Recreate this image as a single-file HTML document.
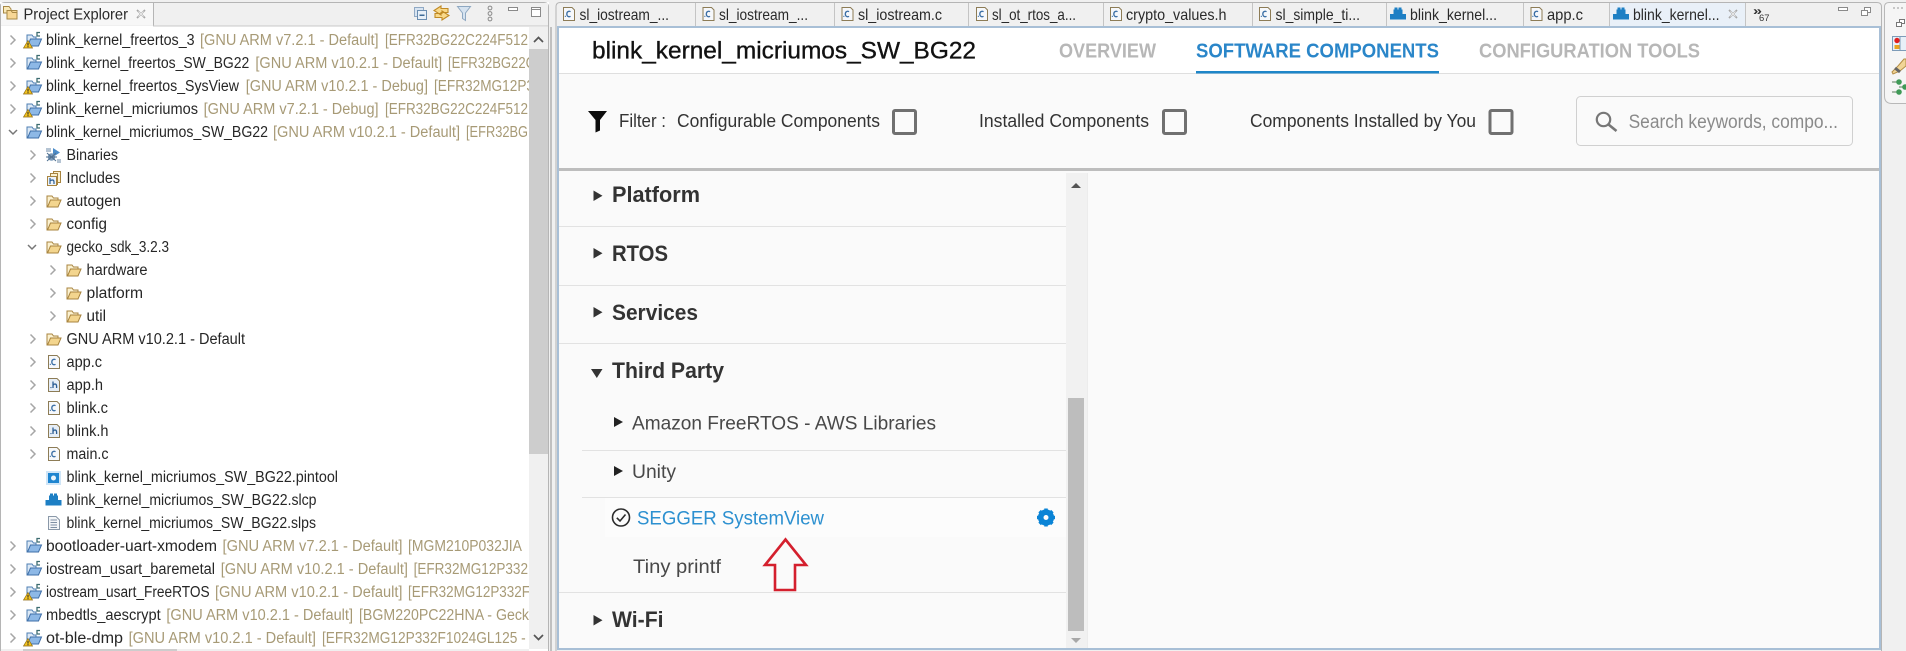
<!DOCTYPE html>
<html><head><meta charset="utf-8"><title>Simplicity Studio</title>
<style>
html,body{margin:0;padding:0;width:1906px;height:651px;overflow:hidden;background:#f0f0f0}
svg{display:block}
text{font-family:"Liberation Sans",sans-serif;white-space:pre}
.t{font-size:15.5px;fill:#262626}
.d{font-size:15.5px;fill:#a79a76}
.e{font-size:16px;fill:#2a2a2a}
.h{font-size:22px;font-weight:bold;fill:#333}
.s{font-size:19.500px;fill:#484848}
.f{font-size:18.500px;fill:#333}
.n{font-size:20px;font-weight:bold;fill:#b7b7b7}
</style></head><body>
<svg width="1906" height="651" viewBox="0 0 1906 651" xmlns="http://www.w3.org/2000/svg">
<defs>
<clipPath id="lc"><rect x="0" y="26" width="529" height="625"/></clipPath>
<g id="cr"><path d="M-2.500 -4.500L2 0L-2.500 4.500" fill="none" stroke="#a6a6a6" stroke-width="1.500"/></g>
<g id="cd"><path d="M-4 -2L0 2L4 -2" fill="none" stroke="#777" stroke-width="1.500"/></g>
<g id="prj"><path d="M1 -5H6L7.500 -3H10V-1H5L2 6H1Z" fill="#dce9f6" stroke="#4f7fb3"/><path d="M4.500 -1H15.500L12.500 6H1.500Z" fill="#8db8e6" stroke="#3f6fa8"/><path d="M14 -7.500h-3v3.500h3" fill="none" stroke="#3c6c70" stroke-width="1.300"/></g>
<g id="warn"><path d="M4 1.500L8.500 9H-0.500Z" fill="#f2c21f" stroke="#8d6a12" stroke-width=".7"/><rect x="3.500" y="3.800" width="1" height="2.800" fill="#222"/><rect x="3.500" y="7.200" width="1" height="1" fill="#222"/></g>
<g id="fo"><path d="M1 -5H6L7.500 -3H12V-1H5L2 6H1Z" fill="#fbf1cf" stroke="#a8843f"/><path d="M4.500 -1H15L12 6H1.500Z" fill="#f3d58e" stroke="#a8843f"/></g>
<g id="fc"><path d="M.5 -6.500H9L11.500 -4V6.500H.5Z" fill="#f6f8fb" stroke="#8d7c56"/><path d="M7.500 -2.200Q6.500 -3 5.500 -2.600Q3.800 -2 3.800 0T5.500 2.600Q6.500 3 7.500 2.200" fill="none" stroke="#3a6ea5" stroke-width="1.300"/><rect x="1.800" y="1.800" width="1.100" height="1.100" fill="#3a6ea5"/></g>
<g id="fh"><path d="M.5 -6.500H9L11.500 -4V6.500H.5Z" fill="#e6eef7" stroke="#8d7c56"/><path d="M5 -3.500V3M5 0.500Q5.500 -1 7 -1T8.600 1V3" fill="none" stroke="#2d5f95" stroke-width="1.300"/><rect x="2.400" y="2" width="1.100" height="1.100" fill="#2d5f95"/></g>
<g id="blk" fill="#1d7fc4"><rect x="-3.500" y="-6.500" width="3" height="2.500"/><rect x=".5" y="-6.500" width="3" height="2.500"/><rect x="-4.500" y="-4.500" width="9" height="5"/><rect x="-8" y="0" width="16" height="5.500"/></g>
</defs>

<!-- Left panel -->
<rect x="0" y="2" width="549" height="649" fill="#fff"/>
<path d="M.5 651V6Q.5 2.500 5 2.500H544Q548.500 2.500 548.500 7V651" fill="none" stroke="#b5b5b5"/>
<rect x="1" y="3" width="547" height="23" fill="#f0f0f0"/>
<rect x="1" y="3" width="152" height="22" fill="#f7f7f7"/>
<line x1="153.500" y1="3" x2="153.500" y2="26" stroke="#b5b5b5"/>
<line x1="153" y1="26" x2="548" y2="26" stroke="#c9c9c9"/>
<!-- explorer icon -->
<path d="M3.500 6.500H9L11 9V13H3.500Z" fill="#f9e9b8" stroke="#a78845"/><path d="M7 10.500H17V19H7Z" fill="#f7d795" stroke="#a78845"/><path d="M7 10.500H11L12.500 12.500H17" fill="none" stroke="#a78845"/>
<text class="e" x="23.500" y="19.500" textLength="104.500" lengthAdjust="spacingAndGlyphs">Project Explorer</text>
<path d="M137 10L145 18M145 10L137 18" stroke="#a8a8a8" stroke-width="1.700" fill="none"/><path d="M138.500 11.500L143.500 16.500M143.500 11.500L138.500 16.500" stroke="#fff" stroke-width=".6"/>
<!-- toolbar -->
<rect x="414.500" y="7.500" width="9" height="9" fill="#d8e4f1" stroke="#90a9c4"/><rect x="417.500" y="10.500" width="9" height="9" fill="#e8f0f8" stroke="#6a8db1"/><rect x="419.500" y="14.500" width="5" height="1.500" fill="#3e6a96"/>
<path d="M441 6L434 10.500L441 15V12.500H448V8.500H441Z M442 11L449 15.500L442 20V17.500H435V13.500H442Z" fill="#f9d98a" stroke="#c08a25" stroke-width="1.100"/>
<path d="M457.500 6.500H470.500L465.500 13V20.500L462.500 18.500V13Z" fill="#d6e3f0" stroke="#8ea8c2"/>
<circle cx="490" cy="8" r="1.900" fill="none" stroke="#8a8a8a"/><circle cx="490" cy="13.500" r="1.900" fill="none" stroke="#8a8a8a"/><circle cx="490" cy="19" r="1.900" fill="none" stroke="#8a8a8a"/>
<rect x="508.500" y="7.500" width="9" height="3" fill="#fff" stroke="#8a8a8a"/>
<rect x="531.500" y="7.500" width="9" height="9" fill="#fff" stroke="#8a8a8a"/><line x1="531" y1="9.500" x2="541" y2="9.500" stroke="#8a8a8a"/>
<!-- scrollbar left -->
<rect x="529" y="27" width="19" height="622" fill="#f0f0f0"/>
<rect x="529" y="49" width="19" height="405" fill="#cdcdcd"/>
<path d="M534 42L538.500 37.500L543 42" fill="none" stroke="#555" stroke-width="1.700"/>
<path d="M534 635L538.500 639.500L543 635" fill="none" stroke="#555" stroke-width="1.700"/>
<rect x="1" y="649" width="528" height="2" fill="#f0f0f0"/><rect x="23" y="649" width="154" height="2" fill="#cdcdcd"/>

<!-- Tree chevrons -->
<use href="#cr" x="13" y="40"/><use href="#cr" x="13" y="63"/><use href="#cr" x="13" y="86"/><use href="#cr" x="13" y="109"/><use href="#cd" x="13" y="132"/>
<use href="#cr" x="33" y="155"/><use href="#cr" x="33" y="178"/><use href="#cr" x="33" y="201"/><use href="#cr" x="33" y="224"/><use href="#cd" x="32" y="247"/>
<use href="#cr" x="53" y="270"/><use href="#cr" x="53" y="293"/><use href="#cr" x="53" y="316"/>
<use href="#cr" x="33" y="339"/><use href="#cr" x="33" y="362"/><use href="#cr" x="33" y="385"/><use href="#cr" x="33" y="408"/><use href="#cr" x="33" y="431"/><use href="#cr" x="33" y="454"/>
<use href="#cr" x="13" y="546"/><use href="#cr" x="13" y="569"/><use href="#cr" x="13" y="592"/><use href="#cr" x="13" y="615"/><use href="#cr" x="13" y="638"/>
<!-- Project icons -->
<use href="#prj" x="26" y="40"/><use href="#warn" x="24" y="39"/>
<use href="#prj" x="26" y="63"/>
<use href="#prj" x="26" y="86"/><use href="#warn" x="24" y="85"/>
<use href="#prj" x="26" y="109"/><use href="#warn" x="24" y="108"/>
<use href="#prj" x="26" y="132"/>
<use href="#prj" x="26" y="546"/><use href="#prj" x="26" y="569"/>
<use href="#prj" x="26" y="592"/><use href="#warn" x="24" y="591"/>
<use href="#prj" x="26" y="615"/>
<use href="#prj" x="26" y="638"/><use href="#warn" x="24" y="637"/>
<!-- Binaries icon -->
<path d="M53 148L60 152.500L53 157Z" fill="#4b8cc9"/><circle cx="51.500" cy="157" r="3.800" fill="#7c9cbc"/><path d="M47 153L56 161M56 153L47 161M46 157H57" stroke="#4f6f8f" stroke-width="1"/><rect x="46" y="148" width="5" height="4" fill="#b5c4d3"/><rect x="57" y="159" width="4" height="4" fill="#b5c4d3"/>
<!-- Includes icon -->
<rect x="53.500" y="171.500" width="7" height="11" fill="#fbf1cf" stroke="#a8843f"/><rect x="50.500" y="173.500" width="7" height="11" fill="#fbf1cf" stroke="#a8843f"/><rect x="47.500" y="176.500" width="9" height="9" fill="#edf3f9" stroke="#a8843f"/><path d="M50 178V184M50 181Q51 180 52.500 180T54 182V184" fill="none" stroke="#2d5f95" stroke-width="1.200"/>
<!-- folders -->
<use href="#fo" x="46" y="201"/><use href="#fo" x="46" y="224"/><use href="#fo" x="46" y="247"/>
<use href="#fo" x="66" y="270"/><use href="#fo" x="66" y="293"/><use href="#fo" x="66" y="316"/>
<use href="#fo" x="46" y="339"/>
<use href="#fc" x="48" y="362"/><use href="#fh" x="48" y="385"/><use href="#fc" x="48" y="408"/><use href="#fh" x="48" y="431"/><use href="#fc" x="48" y="454"/>
<!-- pintool -->
<rect x="46" y="471" width="15" height="14" fill="#cfe5f7"/><rect x="48" y="473" width="11" height="10" fill="#1e85d0"/><circle cx="53.500" cy="478" r="2.500" fill="#e9f4fc"/>
<use href="#blk" x="53.500" y="500"/>
<path d="M48.500 516.500H56L59.500 520V529.500H48.500Z" fill="#f4f6f8" stroke="#8a98a8"/><path d="M50.500 520H57M50.500 522.500H57M50.500 525H57M50.500 527.500H57" stroke="#7e8fa3"/>

<!-- Tree text -->
<g clip-path="url(#lc)">
<text class="t" x="46" y="45" textLength="148.600" lengthAdjust="spacingAndGlyphs">blink_kernel_freertos_3</text>
<text class="d" x="200" y="45" textLength="178.600" lengthAdjust="spacingAndGlyphs">[GNU ARM v7.2.1 - Default]</text>
<text class="d" x="385" y="45" textLength="143" lengthAdjust="spacingAndGlyphs">[EFR32BG22C224F512</text>
<text class="t" x="46" y="68" textLength="203.300" lengthAdjust="spacingAndGlyphs">blink_kernel_freertos_SW_BG22</text>
<text class="d" x="255.400" y="68" textLength="186.800" lengthAdjust="spacingAndGlyphs">[GNU ARM v10.2.1 - Default]</text>
<text class="d" x="448" y="68" textLength="87" lengthAdjust="spacingAndGlyphs">[EFR32BG22C</text>
<text class="t" x="46" y="91" textLength="193" lengthAdjust="spacingAndGlyphs">blink_kernel_freertos_SysView</text>
<text class="d" x="245.700" y="91" textLength="182.300" lengthAdjust="spacingAndGlyphs">[GNU ARM v10.2.1 - Debug]</text>
<text class="d" x="434" y="91" textLength="100" lengthAdjust="spacingAndGlyphs">[EFR32MG12P3</text>
<text class="t" x="46" y="114" textLength="152" lengthAdjust="spacingAndGlyphs">blink_kernel_micriumos</text>
<text class="d" x="203.600" y="114" textLength="175" lengthAdjust="spacingAndGlyphs">[GNU ARM v7.2.1 - Debug]</text>
<text class="d" x="385" y="114" textLength="143" lengthAdjust="spacingAndGlyphs">[EFR32BG22C224F512</text>
<text class="t" x="46" y="137" textLength="222" lengthAdjust="spacingAndGlyphs">blink_kernel_micriumos_SW_BG22</text>
<text class="d" x="273" y="137" textLength="187" lengthAdjust="spacingAndGlyphs">[GNU ARM v10.2.1 - Default]</text>
<text class="d" x="466" y="137" textLength="62" lengthAdjust="spacingAndGlyphs">[EFR32BG</text>
<text class="t" x="66.500" y="160" textLength="51.500" lengthAdjust="spacingAndGlyphs">Binaries</text>
<text class="t" x="66.500" y="183" textLength="53.500" lengthAdjust="spacingAndGlyphs">Includes</text>
<text class="t" x="66.500" y="206" textLength="54.500" lengthAdjust="spacingAndGlyphs">autogen</text>
<text class="t" x="66.500" y="229" textLength="40.500" lengthAdjust="spacingAndGlyphs">config</text>
<text class="t" x="66.500" y="252" textLength="102.500" lengthAdjust="spacingAndGlyphs">gecko_sdk_3.2.3</text>
<text class="t" x="86.500" y="275" textLength="61" lengthAdjust="spacingAndGlyphs">hardware</text>
<text class="t" x="86.500" y="298" textLength="56.500" lengthAdjust="spacingAndGlyphs">platform</text>
<text class="t" x="86.500" y="321" textLength="19.500" lengthAdjust="spacingAndGlyphs">util</text>
<text class="t" x="66.500" y="344" textLength="178.500" lengthAdjust="spacingAndGlyphs">GNU ARM v10.2.1 - Default</text>
<text class="t" x="66.500" y="367" textLength="35.500" lengthAdjust="spacingAndGlyphs">app.c</text>
<text class="t" x="66.500" y="390" textLength="36.500" lengthAdjust="spacingAndGlyphs">app.h</text>
<text class="t" x="66.500" y="413" textLength="41.500" lengthAdjust="spacingAndGlyphs">blink.c</text>
<text class="t" x="66.500" y="436" textLength="42" lengthAdjust="spacingAndGlyphs">blink.h</text>
<text class="t" x="66.500" y="459" textLength="42" lengthAdjust="spacingAndGlyphs">main.c</text>
<text class="t" x="66.500" y="482" textLength="271.500" lengthAdjust="spacingAndGlyphs">blink_kernel_micriumos_SW_BG22.pintool</text>
<text class="t" x="66.500" y="505" textLength="250" lengthAdjust="spacingAndGlyphs">blink_kernel_micriumos_SW_BG22.slcp</text>
<text class="t" x="66.500" y="528" textLength="249.500" lengthAdjust="spacingAndGlyphs">blink_kernel_micriumos_SW_BG22.slps</text>
<text class="t" x="46" y="551" textLength="171" lengthAdjust="spacingAndGlyphs">bootloader-uart-xmodem</text>
<text class="d" x="222.500" y="551" textLength="180" lengthAdjust="spacingAndGlyphs">[GNU ARM v7.2.1 - Default]</text>
<text class="d" x="408" y="551" textLength="114" lengthAdjust="spacingAndGlyphs">[MGM210P032JIA</text>
<text class="t" x="46" y="574" textLength="169" lengthAdjust="spacingAndGlyphs">iostream_usart_baremetal</text>
<text class="d" x="220.700" y="574" textLength="187.300" lengthAdjust="spacingAndGlyphs">[GNU ARM v10.2.1 - Default]</text>
<text class="d" x="413.600" y="574" textLength="114.400" lengthAdjust="spacingAndGlyphs">[EFR32MG12P332</text>
<text class="t" x="46" y="597" textLength="163.600" lengthAdjust="spacingAndGlyphs">iostream_usart_FreeRTOS</text>
<text class="d" x="215" y="597" textLength="187.500" lengthAdjust="spacingAndGlyphs">[GNU ARM v10.2.1 - Default]</text>
<text class="d" x="408" y="597" textLength="122" lengthAdjust="spacingAndGlyphs">[EFR32MG12P332F</text>
<text class="t" x="46" y="620" textLength="114.700" lengthAdjust="spacingAndGlyphs">mbedtls_aescrypt</text>
<text class="d" x="166.400" y="620" textLength="186.600" lengthAdjust="spacingAndGlyphs">[GNU ARM v10.2.1 - Default]</text>
<text class="d" x="359" y="620" textLength="170" lengthAdjust="spacingAndGlyphs">[BGM220PC22HNA - Geck</text>
<text class="t" x="46" y="643" textLength="77" lengthAdjust="spacingAndGlyphs">ot-ble-dmp</text>
<text class="d" x="128.600" y="643" textLength="187.400" lengthAdjust="spacingAndGlyphs">[GNU ARM v10.2.1 - Default]</text>
<text class="d" x="322" y="643" textLength="203.700" lengthAdjust="spacingAndGlyphs">[EFR32MG12P332F1024GL125 -</text>
</g>

<!-- Editor panel -->
<line x1="551" y1="27" x2="551" y2="651" stroke="#c0c0c0" stroke-width="2"/>
<path d="M556 651V7Q556 2.500 560 2.500H1877Q1881.500 2.500 1881.500 7V651" fill="#f0f0f0" stroke="#b5b5b5"/>
<!-- tab separators -->
<path d="M695.500 3V26M834.500 3V26M968.500 3V26M1103.500 3V26M1252.500 3V26M1386.500 3V26M1523.500 3V26M1609.500 3V26M1745.500 3V26" stroke="#c4c4c4"/>
<rect x="1610" y="3" width="135" height="24" fill="#e9f0f8"/>
<!-- tabs -->
<use href="#fc" x="563" y="14"/><text class="e" x="579.500" y="20" textLength="89.500" lengthAdjust="spacingAndGlyphs">sl_iostream_...</text>
<use href="#fc" x="702.500" y="14"/><text class="e" x="719" y="20" textLength="89" lengthAdjust="spacingAndGlyphs">sl_iostream_...</text>
<use href="#fc" x="841.500" y="14"/><text class="e" x="858" y="20" textLength="84" lengthAdjust="spacingAndGlyphs">sl_iostream.c</text>
<use href="#fc" x="976" y="14"/><text class="e" x="992" y="20" textLength="84" lengthAdjust="spacingAndGlyphs">sl_ot_rtos_a...</text>
<use href="#fc" x="1110" y="14"/><text class="e" x="1126" y="20" textLength="100.500" lengthAdjust="spacingAndGlyphs">crypto_values.h</text>
<use href="#fc" x="1259" y="14"/><text class="e" x="1275.500" y="20" textLength="84.500" lengthAdjust="spacingAndGlyphs">sl_simple_ti...</text>
<use href="#blk" x="1398" y="14"/><text class="e" x="1410" y="20" textLength="87" lengthAdjust="spacingAndGlyphs">blink_kernel...</text>
<use href="#fc" x="1530.500" y="14"/><text class="e" x="1547" y="20" textLength="36" lengthAdjust="spacingAndGlyphs">app.c</text>
<use href="#blk" x="1621" y="14"/><text class="e" x="1633" y="20" textLength="86.500" lengthAdjust="spacingAndGlyphs">blink_kernel...</text>
<path d="M1729 10L1737 18M1737 10L1729 18" stroke="#a8a8a8" stroke-width="1.700" fill="none"/><path d="M1730.500 11.500L1735.500 16.500M1735.500 11.500L1730.500 16.500" stroke="#fff" stroke-width=".6"/>
<text x="1753" y="15" font-size="12" font-weight="bold" fill="#333" textLength="9" lengthAdjust="spacingAndGlyphs">»</text>
<text x="1759" y="21" font-size="9.500" fill="#333" textLength="10.500" lengthAdjust="spacingAndGlyphs">67</text>
<rect x="1838.500" y="7.500" width="9" height="3" fill="#fff" stroke="#8a8a8a"/>
<rect x="1864.500" y="7.500" width="6" height="5" fill="#fff" stroke="#8a8a8a"/><rect x="1861.500" y="10.500" width="6" height="5" fill="#fff" stroke="#8a8a8a"/>

<!-- Editor body -->
<rect x="557" y="26" width="1324" height="624" fill="#a8bfd6"/>
<rect x="559" y="28" width="1320" height="620" fill="#fafafa"/>
<rect x="559" y="28" width="1320" height="45" fill="#fff"/>
<line x1="559" y1="73.500" x2="1879" y2="73.500" stroke="#dfdfdf"/>
<text x="592" y="58.500" font-size="24.500" fill="#111" stroke="#111" stroke-width=".35" textLength="384" lengthAdjust="spacingAndGlyphs">blink_kernel_micriumos_SW_BG22</text>
<text class="n" x="1059" y="57.500" textLength="97" lengthAdjust="spacingAndGlyphs">OVERVIEW</text>
<text class="n" x="1196" y="57.500" textLength="243" lengthAdjust="spacingAndGlyphs" style="fill:#2a86c9">SOFTWARE COMPONENTS</text>
<text class="n" x="1479" y="57.500" textLength="221" lengthAdjust="spacingAndGlyphs">CONFIGURATION TOOLS</text>
<rect x="1196" y="71" width="243" height="2.500" fill="#1e86c8"/>
<!-- filter row -->
<path d="M588 111H607L600 120V130.500L595.500 132.500V120Z" fill="#0c0c0c"/>
<text class="f" x="619" y="127" textLength="47" lengthAdjust="spacingAndGlyphs">Filter :</text>
<text class="f" x="677" y="127" textLength="203" lengthAdjust="spacingAndGlyphs">Configurable Components</text>
<rect x="893.500" y="110.500" width="22" height="23" rx="1.500" fill="none" stroke="#707070" stroke-width="3"/>
<text class="f" x="979" y="127" textLength="170" lengthAdjust="spacingAndGlyphs">Installed Components</text>
<rect x="1163.500" y="110.500" width="22" height="23" rx="1.500" fill="none" stroke="#707070" stroke-width="3"/>
<text class="f" x="1250" y="127" textLength="226" lengthAdjust="spacingAndGlyphs">Components Installed by You</text>
<rect x="1490" y="110.500" width="22" height="23" rx="1.500" fill="none" stroke="#707070" stroke-width="3"/>
<rect x="1576.500" y="96.500" width="276" height="49" rx="4" fill="#fafafa" stroke="#d0d0d0"/>
<circle cx="1603.500" cy="119.500" r="6.700" fill="none" stroke="#777" stroke-width="2.200"/><line x1="1608.500" y1="124.500" x2="1616.500" y2="131" stroke="#777" stroke-width="2.600"/>
<text x="1628.600" y="128" font-size="19" fill="#8a8a8a" textLength="209.400" lengthAdjust="spacingAndGlyphs">Search keywords, compo...</text>
<rect x="559" y="168" width="1320" height="3" fill="#bdbdbd"/>
<!-- list -->
<rect x="1066" y="173" width="21" height="475" fill="#f1f1f1"/>
<line x1="1087.500" y1="173" x2="1087.500" y2="648" stroke="#ececec"/>
<rect x="1068" y="398" width="16" height="233" fill="#bdbdbd"/>
<path d="M1076 183L1071 188H1081Z" fill="#555"/><path d="M1076 643L1071 638H1081Z" fill="#a8a8a8"/>
<path d="M559 226.500H1066M559 285.500H1066M559 343.500H1066M582 450.500H1066M582 497.500H1066M559 592.500H1066" stroke="#e2e2e2"/>
<rect x="605" y="498" width="461" height="39" fill="#fcfcfc"/>
<path d="M593.500 190.500L602.500 195.800L593.500 201Z" fill="#333"/>
<text class="h" x="612" y="202" textLength="88" lengthAdjust="spacingAndGlyphs">Platform</text>
<path d="M593.500 248L602.500 253.300L593.500 258.500Z" fill="#333"/>
<text class="h" x="612" y="261" textLength="56" lengthAdjust="spacingAndGlyphs">RTOS</text>
<path d="M593.500 307L602.500 312.300L593.500 317.500Z" fill="#333"/>
<text class="h" x="612" y="320" textLength="86" lengthAdjust="spacingAndGlyphs">Services</text>
<path d="M591 369H602.500L596.800 378Z" fill="#333"/>
<text class="h" x="612" y="378" textLength="112" lengthAdjust="spacingAndGlyphs">Third Party</text>
<path d="M614 417L623 422L614 427Z" fill="#222"/>
<text class="s" x="632" y="429.500" textLength="304" lengthAdjust="spacingAndGlyphs">Amazon FreeRTOS - AWS Libraries</text>
<path d="M614 466L623 471L614 476Z" fill="#222"/>
<text class="s" x="632" y="478" textLength="44" lengthAdjust="spacingAndGlyphs">Unity</text>
<circle cx="621" cy="517.500" r="8.500" fill="none" stroke="#2b2b2b" stroke-width="1.600"/>
<path d="M616.800 517.800L620 521L625.500 514.500" fill="none" stroke="#2b2b2b" stroke-width="1.600"/>
<text class="s" x="637" y="524.500" textLength="187" lengthAdjust="spacingAndGlyphs" style="fill:#2c90d0">SEGGER SystemView</text>
<g transform="translate(1046 517.500)"><circle r="6.200" fill="none" stroke="#0a84d6" stroke-width="3.800"/><path d="M-9 0L9 0M0 -9L0 9M-6.400 -6.400L6.400 6.400M-6.400 6.400L6.400 -6.400" stroke="#0a84d6" stroke-width="3.500"/><circle r="2.500" fill="#fcfcfc"/></g>
<text class="s" x="633" y="573" textLength="88" lengthAdjust="spacingAndGlyphs">Tiny printf</text>
<path d="M593.500 615L602.500 620.300L593.500 625.500Z" fill="#333"/>
<text class="h" x="612" y="627" textLength="51.500" lengthAdjust="spacingAndGlyphs">Wi-Fi</text>
<path d="M785.500 539.500L806 565H795V590H775V565H765Z" fill="none" stroke="#d41f2d" stroke-width="2.600"/>

<!-- Right stack -->
<path d="M1906 2.500H1889Q1884.500 2.500 1884.500 7V96Q1884.500 103.500 1892 103.500H1906" fill="#f5f5f5" stroke="#b8b8b8"/>
<path d="M1893 8h2M1897 8h2M1901 8h2" stroke="#999"/>
<rect x="1899.500" y="19.500" width="5" height="4" fill="#fff" stroke="#777"/><rect x="1896.500" y="22.500" width="5" height="4" fill="#fff" stroke="#777"/>
<rect x="1892.500" y="36.500" width="14" height="14" fill="#e8f0f8" stroke="#7d9bb8"/><line x1="1900" y1="37" x2="1900" y2="50" stroke="#7d9bb8"/><circle cx="1897" cy="40.500" r="2.700" fill="#e11f1f"/><rect x="1894.500" y="45" width="5" height="4" fill="#e9a320"/>
<path d="M1892 72L1898 66L1904 59H1906V66L1900 71L1893 74Z" fill="#f1d597" stroke="#b58d45"/><path d="M1895 68L1900 72" stroke="#666" stroke-width="3"/>
<path d="M1892 82H1897M1892 92H1897M1899 87H1904" stroke="#5a7d5a"/><circle cx="1899" cy="82" r="2.800" fill="#3f9a57"/><circle cx="1899" cy="92" r="2.800" fill="#3f9a57"/><circle cx="1905" cy="87" r="2.800" fill="#3f9a57"/>
</svg>
</body></html>
